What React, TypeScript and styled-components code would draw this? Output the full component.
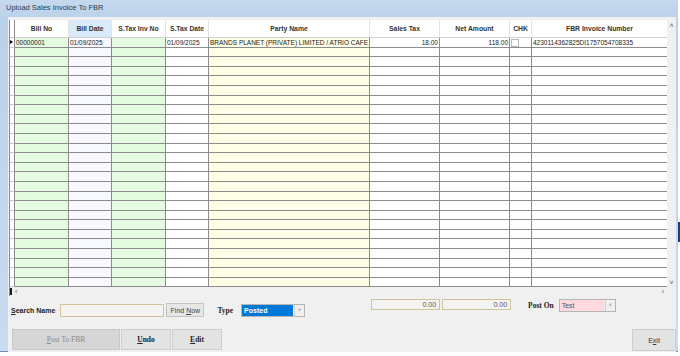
import styled, { createGlobalStyle } from "styled-components";

const GlobalStyle = createGlobalStyle`
  html, body {
    margin: 0;
    padding: 0;
    background: #ffffff;
    font-family: "Liberation Sans", Arial, sans-serif;
  }
`;

type Col = { title: string; width: number; bg: string; align?: "left" | "right" };

const columns: Col[] = [
  { title: "Bill No", width: 54, bg: "#e4fbe1" },
  { title: "Bill Date", width: 43, bg: "#f8f8ff" },
  { title: "S.Tax Inv No", width: 54, bg: "#e4fbe1" },
  { title: "S.Tax Date", width: 43, bg: "#ffffff" },
  { title: "Party Name", width: 161, bg: "#fefee6" },
  { title: "Sales Tax", width: 70, bg: "#ffffff", align: "right" },
  { title: "Net Amount", width: 70, bg: "#ffffff", align: "right" },
  { title: "CHK", width: 22, bg: "#ffffff" },
  { title: "FBR Invoice Number", width: 136, bg: "#ffffff" },
];

const firstRow = [
  "00000001",
  "01/09/2025",
  "",
  "01/09/2025",
  "BRANDS PLANET (PRIVATE) LIMITED / ATRIO CAFE",
  "18.00",
  "118.00",
  "",
  "4230114362825DI1757054708335",
];

const EMPTY_ROWS = 25;

const App = () => {
  return (
    <>
      <GlobalStyle />
      <Screen>
        <Window>
          <TitleBar>Upload Sales Invoice To FBR</TitleBar>
          <Client>
            <Grid>
              <GridBody>
                <HeaderRow>
                  <RowHead />
                  {columns.map((c, i) => (
                    <HeaderCell key={c.title} w={c.width} active={i === 1}>
                      {c.title}
                    </HeaderCell>
                  ))}
                </HeaderRow>
                <DataRow>
                  <RowHead>
                    <Pointer />
                  </RowHead>
                  {columns.map((c, i) => (
                    <Cell key={c.title} w={c.width} bg={c.bg} align={c.align}>
                      {i === 7 ? <CheckBox /> : firstRow[i]}
                    </Cell>
                  ))}
                </DataRow>
                {Array.from({ length: EMPTY_ROWS }).map((_, r) => (
                  <DataRow key={r}>
                    <RowHead />
                    {columns.map((c) => (
                      <Cell key={c.title} w={c.width} bg={c.bg} />
                    ))}
                  </DataRow>
                ))}
              </GridBody>
              <VScroll>
                <Arrow>&#708;</Arrow>
                <Arrow>&#709;</Arrow>
              </VScroll>
              <HScroll>
                <ThumbMark />
                <Arrow>&lsaquo;</Arrow>
                <Spacer />
                <Arrow>&rsaquo;</Arrow>
              </HScroll>
            </Grid>

            <FilterBar>
              <SearchGroup>
                <Label sans>
                  <u>S</u>earch Name
                </Label>
                <SearchInput />
                <SmallButton>
                  Find{"\u00a0"}
                  <u>N</u>ow
                </SmallButton>
                <Label style={{ marginLeft: 13 }}>Type</Label>
                <Combo w={64} bg="#0078d7">
                  <ComboText color="#ffffff" bold>
                    Posted
                  </ComboText>
                  <ComboArrow>&#709;</ComboArrow>
                </Combo>
              </SearchGroup>
              <Totals>
                <TotalBox>0.00</TotalBox>
                <TotalBox>0.00</TotalBox>
              </Totals>
              <PostOn>
                <Label>Post On</Label>
                <Combo w={57} bg="#ffd9dd">
                  <ComboText color="#555">Test</ComboText>
                  <ComboArrow>&#709;</ComboArrow>
                </Combo>
              </PostOn>
            </FilterBar>

            <ButtonBar>
              <ButtonGroup>
                <BigButton w={108} disabled>
                  <u>P</u>ost To FBR
                </BigButton>
                <BigButton w={50}>
                  <u>U</u>ndo
                </BigButton>
                <BigButton w={50}>
                  <u>E</u>dit
                </BigButton>
              </ButtonGroup>
              <ExitButton>
                E<u>x</u>it
              </ExitButton>
            </ButtonBar>
          </Client>
        </Window>
        <EdgeMark />
      </Screen>
    </>
  );
};

const Screen = styled.div`
  position: relative;
  width: 680px;
  height: 356px;
  overflow: hidden;
  background: #ffffff;
`;

const Window = styled.div`
  width: 678px;
  height: 352px;
  background: linear-gradient(180deg, #c5d8ee 0%, #bad1ea 6%, #c9dbef 100%);
  border-bottom: 1px solid #6c8fb8;
  display: flex;
  flex-direction: column;
  box-sizing: border-box;
`;

const TitleBar = styled.div`
  height: 17px;
  line-height: 16px;
  padding-left: 6px;
  font-size: 7.5px;
  color: #2a3a4c;
  flex: none;
`;

const Client = styled.div`
  flex: 1;
  margin: 0 2px 2px 8px;
  background: #f0f0f0;
  display: flex;
  flex-direction: column;
  padding: 3px 0 0 1px;
`;

const Grid = styled.div`
  width: 666px;
  display: grid;
  grid-template-columns: 657px 9px;
  grid-template-rows: 267px 9px;
  background: #ffffff;
  border-left: 1px solid #8a8a8a;
  box-sizing: border-box;
`;

const GridBody = styled.div`
  overflow: hidden;
  background: #ffffff;
`;

const HeaderRow = styled.div`
  display: flex;
  height: 18px;
`;

const RowHead = styled.div`
  width: 4px;
  flex: none;
  background: #ffffff;
  border-right: 1px solid #8a8a8a;
  border-bottom: 1px solid #c8c8c8;
  display: flex;
  align-items: center;
`;

const Pointer = styled.div`
  width: 0;
  height: 0;
  border-top: 2px solid transparent;
  border-bottom: 2px solid transparent;
  border-left: 3px solid #000;
`;

const HeaderCell = styled.div<{ w: number; active?: boolean }>`
  width: ${(p) => p.w}px;
  flex: none;
  box-sizing: border-box;
  background: ${(p) => (p.active ? "#d9eaf9" : "#ffffff")};
  border-right: 1px solid #e2e2e2;
  border-bottom: 1px solid #d0d0d0;
  font-size: 6.8px;
  font-weight: bold;
  color: #333;
  display: flex;
  align-items: center;
  justify-content: center;
`;

const DataRow = styled.div`
  display: flex;
  height: 9.6px;
`;

const Cell = styled.div<{ w: number; bg: string; align?: "left" | "right" }>`
  width: ${(p) => p.w}px;
  flex: none;
  box-sizing: border-box;
  background: ${(p) => p.bg};
  border-right: 1px solid #8c8c8c;
  border-bottom: 1px solid #8c8c8c;
  font-size: 6.5px;
  line-height: 9px;
  color: #222;
  padding: 0 1px;
  white-space: nowrap;
  overflow: hidden;
  text-align: ${(p) => p.align ?? "left"};
`;

const CheckBox = styled.div`
  width: 6px;
  height: 6px;
  margin-top: 1px;
  border: 1px solid #b8b8b8;
  background: #fff;
`;

const VScroll = styled.div`
  background: #f0f0f0;
  display: flex;
  flex-direction: column;
  justify-content: space-between;
  align-items: center;
  padding: 2px 0 1px;
`;

const HScroll = styled.div`
  grid-column: 1 / span 2;
  background: #f0f0f0;
  display: flex;
  align-items: center;
  padding-right: 12px;
`;

const ThumbMark = styled.div`
  width: 2px;
  height: 7px;
  background: #1a1a1a;
  margin-right: 3px;
`;

const Arrow = styled.span`
  font-size: 7px;
  line-height: 7px;
  color: #606060;
`;

const Spacer = styled.div`
  flex: 1;
`;

const FilterBar = styled.div`
  display: flex;
  align-items: flex-start;
  height: 33px;
`;

const SearchGroup = styled.div`
  display: flex;
  align-items: center;
  margin-top: 7px;
`;

const ButtonGroup = styled.div`
  display: flex;
  align-items: center;
`;

const Label = styled.span<{ sans?: boolean }>`
  font-family: ${(p) =>
    p.sans ? `"Liberation Sans", Arial, sans-serif` : `"Liberation Serif", "Times New Roman", serif`};
  font-size: ${(p) => (p.sans ? "7px" : "7.5px")};
  font-weight: bold;
  color: #222;
  margin-left: ${(p) => (p.sans ? "2px" : "0")};
`;

const SearchInput = styled.div`
  width: 104px;
  height: 13px;
  box-sizing: border-box;
  margin-left: 5px;
  border: 1px solid #cfc596;
  background: #f3f3f3;
`;

const SmallButton = styled.div`
  width: 38px;
  height: 14px;
  box-sizing: border-box;
  margin-left: 2px;
  border: 1px solid #c4c4c4;
  background: #e6e6e6;
  font-size: 7px;
  color: #444;
  display: flex;
  align-items: center;
  justify-content: center;
`;

const Combo = styled.div<{ w: number; bg: string }>`
  width: ${(p) => p.w}px;
  height: 13px;
  box-sizing: border-box;
  margin-left: 8px;
  border: 1px solid #b5b5b5;
  background: #f0f0f0;
  display: flex;
  align-items: stretch;
  > span:first-child {
    background: ${(p) => p.bg};
  }
`;

const ComboText = styled.span<{ color: string; bold?: boolean }>`
  flex: 1;
  font-size: 7px;
  line-height: 11px;
  padding-left: 2px;
  color: ${(p) => p.color};
  font-weight: ${(p) => (p.bold ? "bold" : "normal")};
  margin: 0 1px 0 0;
`;

const ComboArrow = styled.span`
  width: 9px;
  font-size: 6px;
  line-height: 11px;
  text-align: center;
  color: #777;
  border-left: 1px solid #d0d0d0;
`;

const Totals = styled.div`
  display: flex;
  gap: 2px;
  margin-left: 66px;
  margin-top: 3px;
`;

const TotalBox = styled.div`
  width: 69px;
  height: 11px;
  box-sizing: border-box;
  border: 1px solid #cfc596;
  background: #f3f3f3;
  font-size: 7px;
  line-height: 9px;
  text-align: right;
  padding-right: 3px;
  color: #555;
`;

const PostOn = styled.div`
  display: flex;
  align-items: center;
  margin-left: 17px;
  margin-top: 3px;
  ${Combo} {
    margin-left: 5px;
  }
`;

const ButtonBar = styled.div`
  display: flex;
  justify-content: space-between;
  align-items: flex-start;
  padding-left: 3px;
  margin-top: auto;
  margin-bottom: 1px;
`;

const BigButton = styled.div<{ w: number; disabled?: boolean }>`
  width: ${(p) => p.w}px;
  height: 21px;
  box-sizing: border-box;
  margin-right: 1px;
  border: 1px solid ${(p) => (p.disabled ? "#c8c8c8" : "#cfcfcf")};
  background: ${(p) => (p.disabled ? "#d6d6d6" : "#e3e3e3")};
  font-family: "Liberation Serif", "Times New Roman", serif;
  font-size: 7.5px;
  font-weight: ${(p) => (p.disabled ? "normal" : "bold")};
  color: ${(p) => (p.disabled ? "#8a8a8a" : "#222")};
  display: flex;
  align-items: center;
  justify-content: center;
`;

const ExitButton = styled.div`
  width: 44px;
  height: 22px;
  box-sizing: border-box;
  border: 1px solid #cfcfcf;
  background: #e3e3e3;
  font-size: 7px;
  color: #333;
  display: flex;
  align-items: center;
  justify-content: center;
`;

const EdgeMark = styled.div`
  position: absolute;
  right: 0;
  top: 222px;
  width: 2px;
  height: 20px;
  background: #1b3f7a;
`;

export default App;
